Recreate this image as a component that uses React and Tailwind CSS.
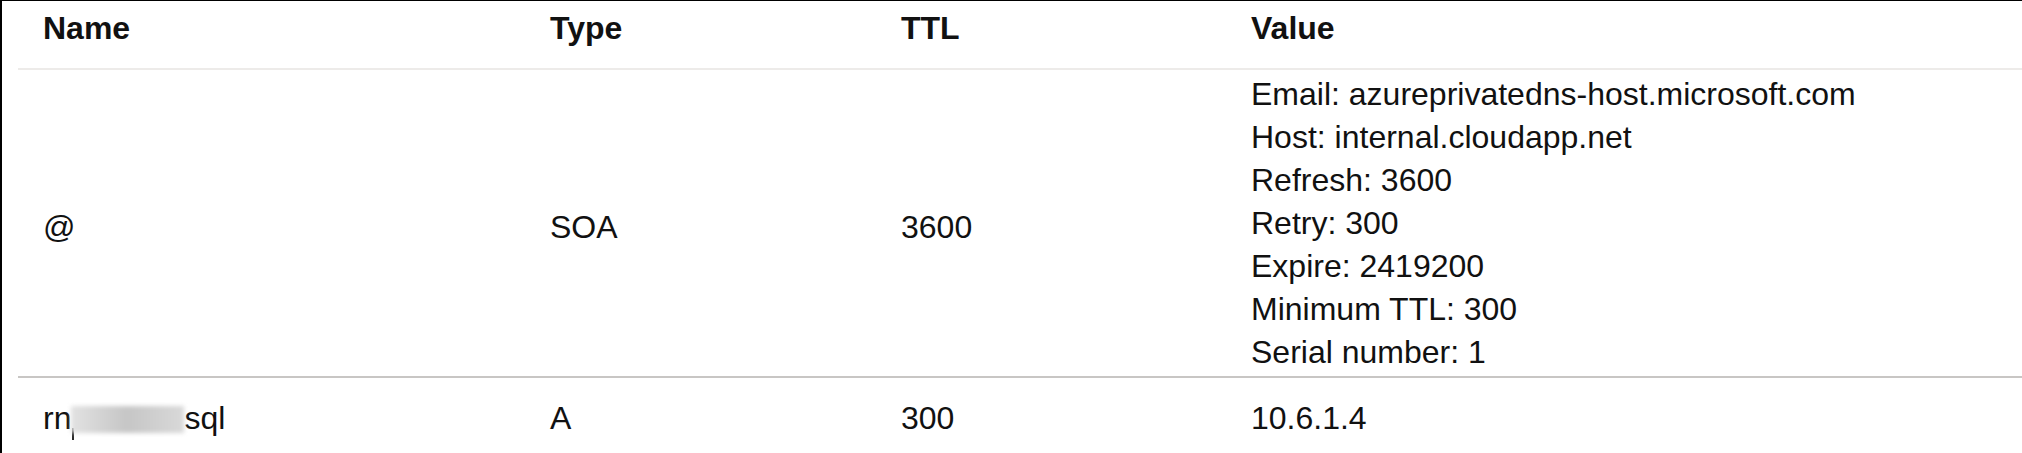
export default function App() {
  const soa = [
    'Email: azureprivatedns-host.microsoft.com',
    'Host: internal.cloudapp.net',
    'Refresh: 3600',
    'Retry: 300',
    'Expire: 2419200',
    'Minimum TTL: 300',
    'Serial number: 1',
  ];

  const cols = 'grid grid-cols-[507px_351px_350px_1fr]';

  return (
    <div
      className="min-h-screen h-[453px] overflow-hidden bg-white border-t border-l-2 border-black text-[32px] leading-[43px] text-[#111111]"
      style={{ fontFamily: '"Liberation Sans", Arial, sans-serif' }}
    >
      <div className="pl-[16px]">
        {/* Header */}
        <div className={`${cols} h-[69px] pt-[6px] border-b-2 border-[#edebe9] font-semibold`}>
          <div className="pl-[25px]">Name</div>
          <div className="pl-[25px]">Type</div>
          <div className="pl-[25px]">TTL</div>
          <div className="pl-[25px]">Value</div>
        </div>

        {/* SOA row */}
        <div className={`${cols} pt-[3px] pb-[2px] border-b-2 border-[#c8c6c4]`}>
          <div className="pl-[25px] flex items-center pt-[8px]">@</div>
          <div className="pl-[25px] flex items-center pt-[8px]">SOA</div>
          <div className="pl-[25px] flex items-center pt-[8px]">3600</div>
          <div className="pl-[25px] flex flex-col">
            {soa.map((line) => (
              <span key={line} className="whitespace-nowrap">{line}</span>
            ))}
          </div>
        </div>

        {/* A row */}
        <div className={`${cols} pt-[19px] pb-[19px]`}>
          <div className="pl-[25px] flex items-center whitespace-nowrap">
            <span>rn</span>
            <span className="relative inline-block w-[113px] h-[27px] mt-[2px]">
              <span className="absolute left-[1px] top-[22px] w-[2px] h-[12px] bg-[#2a2a2a]" />
              <span className="absolute inset-0 bg-linear-to-r from-[#e2e2e2] via-[#c6c6c6] to-[#d9d9d9] blur-[2px]" />
            </span>
            <span>sql</span>
          </div>
          <div className="pl-[25px]">A</div>
          <div className="pl-[25px]">300</div>
          <div className="pl-[25px]">10.6.1.4</div>
        </div>
      </div>
    </div>
  );
}
